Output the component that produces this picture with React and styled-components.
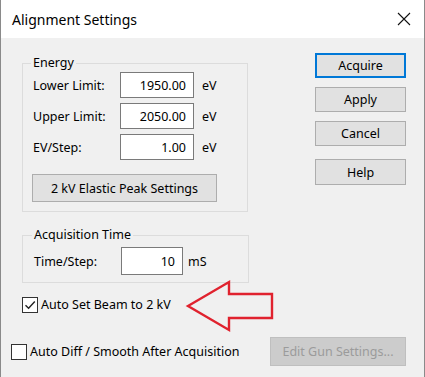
import React from "react";
import styled, { createGlobalStyle } from "styled-components";

const Global = createGlobalStyle`
  html, body { margin: 0; padding: 0; background: #ffffff; }
  * { box-sizing: border-box; }
  body { font-family: "Noto Sans", "Open Sans", sans-serif; }
`;

const Window = styled.div`
  width: 425px;
  height: 377px;
  border-left: 1px solid #8a8a8a;
  border-right: 1px solid #8a8a8a;
  display: flex;
  flex-direction: column;
  font-family: "Noto Sans", "Open Sans", sans-serif;
  font-size: 12.5px;
  color: #000;
`;

const TitleBar = styled.div`
  height: 38px;
  background: #ffffff;
  display: flex;
  align-items: center;
  padding: 0 13px 0 11px;
  font-size: 14px;
  justify-content: space-between;
`;

const CloseIcon = styled.svg`
  width: 14px;
  height: 14px;
  display: block;
`;

const Body = styled.div`
  flex: 1;
  background: #f0f0f0;
  position: relative;
  display: flex;
  flex-direction: column;
`;

const Top = styled.div`
  display: flex;
  justify-content: space-between;
`;

const LeftCol = styled.div`
  padding: 17px 0 0 21px;
  display: flex;
  flex-direction: column;
`;

const Group = styled.fieldset`
  margin: 0;
  width: ${(p) => p.$w}px;
  border: 1px solid #dcdcdc;
  padding: ${(p) => p.$pad};
  min-inline-size: 0;
  & + & { margin-top: 15px; }
`;

const Legend = styled.legend`
  padding: 0 2px;
  margin-left: ${(p) => p.$ml}px;
  line-height: 16px;
  font-size: 12.5px;
`;

const FieldGrid = styled.div`
  display: grid;
  grid-template-columns: ${(p) => p.$label}px ${(p) => p.$input}px auto;
  row-gap: ${(p) => p.$gap || 0}px;
  align-items: center;
`;

const Label = styled.span`
  white-space: nowrap;
`;

const Input = styled.div`
  height: ${(p) => p.$h}px;
  background: #ffffff;
  border: 1px solid #7a7a7a;
  display: flex;
  align-items: center;
  justify-content: flex-end;
  padding-right: 7px;
`;

const Unit = styled.span`
  margin-left: ${(p) => p.$ml}px;
`;

const Button = styled.div`
  width: ${(p) => p.$w}px;
  height: ${(p) => p.$h}px;
  background: ${(p) => (p.$disabled ? "#cccccc" : "#e1e1e1")};
  border: ${(p) => (p.$default ? "2px solid #0078d7" : p.$disabled ? "1px solid #bfbfbf" : "1px solid #adadad")};
  color: ${(p) => (p.$disabled ? "#9b9b9b" : "#000")};
  display: flex;
  align-items: center;
  justify-content: center;
  white-space: nowrap;
`;

const PeakButton = styled(Button)`
  margin: 14px 0 0 -1px;
`;

const RightCol = styled.div`
  padding: 15px 18px 0 0;
  display: flex;
  flex-direction: column;
  gap: 9px;
`;

const HelpButton = styled(Button)`
  margin-top: 4px;
`;

const CheckRow = styled.label`
  display: flex;
  align-items: center;
  gap: 3px;
  margin-top: ${(p) => p.$mt || 0}px;
  white-space: nowrap;
`;

const Box = styled.span`
  width: 16px;
  height: 16px;
  border: 1px solid #333333;
  background: #ffffff;
  display: flex;
  align-items: center;
  justify-content: center;
`;

const Bottom = styled.div`
  margin-top: auto;
  display: flex;
  align-items: center;
  justify-content: space-between;
  padding: 0 18px 11px 10px;
`;

const Arrow = styled.svg`
  position: absolute;
  left: 183px;
  top: 242px;
  width: 92px;
  height: 54px;
  overflow: visible;
`;

const Check = ({ checked }) => (
  <Box>
    {checked && (
      <svg width="12" height="12" viewBox="0 0 12 12">
        <path d="M1.5 6.2 L4.6 9.3 L10.8 2.5" fill="none" stroke="#222" strokeWidth="1.4" />
      </svg>
    )}
  </Box>
);

export default function App() {
  return (
    <>
      <Global />
      <Window>
        <TitleBar>
          <span>Alignment Settings</span>
          <CloseIcon viewBox="0 0 14 14">
            <path d="M1 1 L13 13 M13 1 L1 13" stroke="#111" strokeWidth="1.1" />
          </CloseIcon>
        </TitleBar>
        <Body>
          <Top>
            <LeftCol>
              <Group $w={226} $pad="1px 9px 9px 10px">
                <Legend $ml={-2}>Energy</Legend>
                <FieldGrid $label={87} $input={74} $gap={5}>
                  <Label>Lower Limit:</Label>
                  <Input $h={26}>1950.00</Input>
                  <Unit $ml={8}>eV</Unit>
                  <Label>Upper Limit:</Label>
                  <Input $h={26}>2050.00</Input>
                  <Unit $ml={8}>eV</Unit>
                  <Label>EV/Step:</Label>
                  <Input $h={26}>1.00</Input>
                  <Unit $ml={8}>eV</Unit>
                </FieldGrid>
                <PeakButton $w={185} $h={28}>2 kV Elastic Peak Settings</PeakButton>
              </Group>
              <Group $w={227} $pad="4px 9px 7px 11px">
                <Legend $ml={-2}>Acquisition Time</Legend>
                <FieldGrid $label={87} $input={62}>
                  <Label>Time/Step:</Label>
                  <Input $h={28}>10</Input>
                  <Unit $ml={5}>mS</Unit>
                </FieldGrid>
              </Group>
              <CheckRow $mt={13}>
                <Check checked />
                <span>Auto Set Beam to 2 kV</span>
              </CheckRow>
            </LeftCol>
            <RightCol>
              <Button $w={91} $h={25} $default>Acquire</Button>
              <Button $w={91} $h={25}>Apply</Button>
              <Button $w={91} $h={25}>Cancel</Button>
              <HelpButton $w={91} $h={26}>Help</HelpButton>
            </RightCol>
          </Top>
          <Bottom>
            <CheckRow>
              <Check />
              <span>Auto Diff / Smooth After Acquisition</span>
            </CheckRow>
            <Button $w={136} $h={29} $disabled>Edit Gun Settings...</Button>
          </Bottom>
          <Arrow viewBox="0 0 92 54">
            <polygon
              points="4,26 45,2 45,14 88,14 88,38 45,38 45,50"
              fill="none"
              stroke="#e0222e"
              strokeWidth="2.4"
              strokeLinejoin="miter"
            />
          </Arrow>
        </Body>
      </Window>
    </>
  );
}
